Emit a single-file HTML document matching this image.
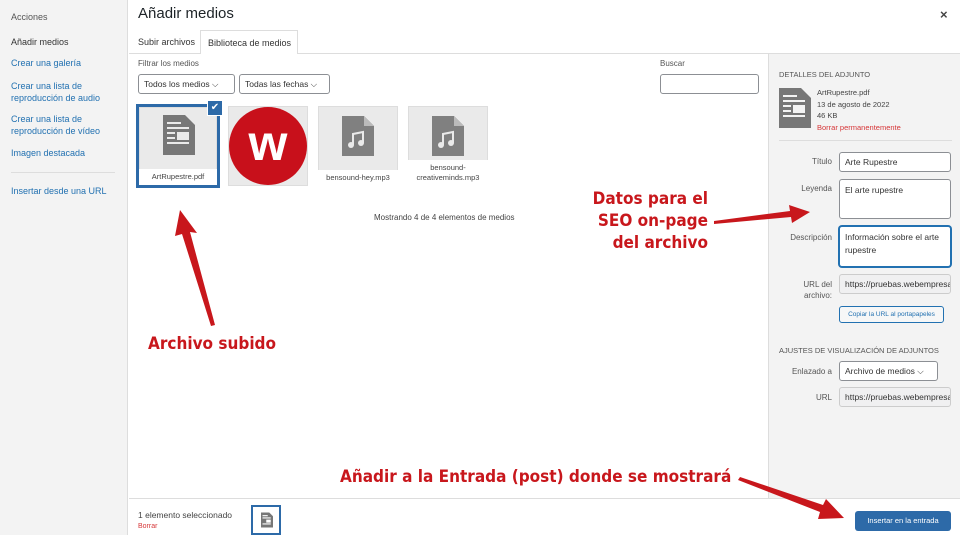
<!DOCTYPE html>
<html><head><meta charset="utf-8"><style>
*{box-sizing:border-box;margin:0;padding:0}
body{width:960px;height:535px;overflow:hidden;font-family:"Liberation Sans",sans-serif;background:#fff;position:relative;color:#333}
.abs{position:absolute}
.side{left:0;top:0;width:128px;height:535px;background:#f3f3f3;border-right:1px solid #ddd}
.side div{position:absolute;left:11px;font-size:9px;color:#2271b1;line-height:12px}
.lbl{font-size:8px;color:#555}
.input{position:absolute;background:#fff;border:1px solid #8c8f94;border-radius:3px;font-size:8.5px;color:#333;padding:0 5px;line-height:18px;height:20px;overflow:hidden;white-space:nowrap}
.thumb{position:absolute;top:106px;width:80px;height:80px;background:#eaeaea;box-shadow:inset 0 0 0 1px #ddd}
.cap{position:absolute;bottom:0;left:0;right:0;background:#fff;font-size:7.5px;text-align:center;color:#444;line-height:10px;padding:3px 0}
.ann{position:absolute;color:#c8171c;font-weight:bold;font-family:"DejaVu Sans Condensed","Liberation Sans",sans-serif;font-size:17px;text-align:right;line-height:22px}
</style></head><body>
<div class="abs side">
<div style="top:11px;color:#555">Acciones</div>
<div style="top:36px;color:#333">Añadir medios</div>
<div style="top:57px">Crear una galería</div>
<div style="top:80px">Crear una lista de<br>reproducción de audio</div>
<div style="top:113px">Crear una lista de<br>reproducción de vídeo</div>
<div style="top:147px">Imagen destacada</div>
<div style="top:172px;left:11px;width:104px;height:1px;background:#ddd"></div>
<div style="top:185px">Insertar desde una URL</div>
</div>
<div class="abs" style="left:138px;top:5px;font-size:15px;color:#1d2327">Añadir medios</div>
<div class="abs" style="left:940px;top:7px;font-size:13px;color:#444;font-weight:bold">×</div>
<div class="abs" style="left:129px;top:53px;right:0;height:1px;background:#ddd"></div>
<div class="abs" style="left:138px;top:37px;font-size:9px">Subir archivos</div>
<div class="abs" style="left:200px;top:30px;width:98px;height:24px;border:1px solid #ddd;border-bottom:none;background:#fff;font-size:9px;padding:7px 0 0 7px">Biblioteca de medios</div>
<div class="abs lbl" style="left:138px;top:59px">Filtrar los medios</div>
<div class="input" style="left:138px;top:74px;width:97px">Todos los medios ⌵</div>
<div class="input" style="left:239px;top:74px;width:91px">Todas las fechas ⌵</div>
<div class="abs lbl" style="left:660px;top:59px">Buscar</div>
<div class="input" style="left:660px;top:74px;width:99px"></div>
<div class="thumb" style="left:136px;top:104px;width:84px;height:84px;border:3px solid #2d6aa8;background:#eaeaea">
<svg class="abs" style="left:24px;top:8px" width="32" height="40" viewBox="0 0 32 40"><path d="M0 0h22l10 10v30H0z" fill="#777"/><g fill="#eaeaea"><rect x="4" y="7" width="14" height="2"/><rect x="4" y="12" width="22" height="2"/><rect x="4" y="17" width="8" height="2"/><rect x="14" y="17" width="12" height="8"/><rect x="4" y="22" width="8" height="2"/><rect x="4" y="27" width="22" height="2"/></g></svg>
<div class="cap">ArtRupestre.pdf</div></div>
<div class="abs" style="left:207px;top:100px;width:16px;height:16px;background:#2d6aa8;border:1px solid #fff;color:#fff;font-size:10px;text-align:center;line-height:14px">✔</div>
<div class="thumb" style="left:228px"><div class="abs" style="left:1px;top:1px;width:78px;height:78px;border-radius:50%;background:#c8101b;color:#fff;font-size:50px;font-weight:bold;text-align:center;line-height:72px">w</div></div>
<div class="thumb" style="left:318px"><svg class="abs" style="left:24px;top:10px" width="32" height="40" viewBox="0 0 32 40"><path d="M0 0h22l10 10v30H0z" fill="#808080"/><path d="M22 0v10h10" fill="#bbb"/><path d="M11 29V18l10-2v11" stroke="#eaeaea" stroke-width="2" fill="none"/><circle cx="9" cy="29" r="3" fill="#eaeaea"/><circle cx="19" cy="27" r="3" fill="#eaeaea"/></svg><div class="cap">bensound-hey.mp3</div></div>
<div class="thumb" style="left:408px"><svg class="abs" style="left:24px;top:10px" width="32" height="40" viewBox="0 0 32 40"><path d="M0 0h22l10 10v30H0z" fill="#808080"/><path d="M22 0v10h10" fill="#bbb"/><path d="M11 29V18l10-2v11" stroke="#eaeaea" stroke-width="2" fill="none"/><circle cx="9" cy="29" r="3" fill="#eaeaea"/><circle cx="19" cy="27" r="3" fill="#eaeaea"/></svg><div class="cap">bensound-<br>creativeminds.mp3</div></div>
<div class="abs" style="left:374px;top:213px;font-size:8px;color:#444">Mostrando 4 de 4 elementos de medios</div>
<div class="abs" style="left:768px;top:54px;width:192px;height:444px;background:#f3f3f3;border-left:1px solid #ddd"></div>
<div class="abs lbl" style="left:779px;top:70px;font-size:7.5px">DETALLES DEL ADJUNTO</div>
<svg class="abs" style="left:779px;top:87px" width="32" height="42" viewBox="0 0 32 40"><path d="M0 0h22l10 10v30H0z" fill="#777"/><g fill="#f3f3f3"><rect x="4" y="7" width="14" height="2"/><rect x="4" y="12" width="22" height="2"/><rect x="4" y="17" width="8" height="2"/><rect x="14" y="17" width="12" height="8"/><rect x="4" y="22" width="8" height="2"/><rect x="4" y="27" width="22" height="2"/></g></svg>
<div class="abs" style="left:817px;top:87px;font-size:7.5px;line-height:11.5px;color:#444">ArtRupestre.pdf<br>13 de agosto de 2022<br>46 KB<br><span style="color:#d63638">Borrar permanentemente</span></div>
<div class="abs" style="left:779px;top:140px;width:173px;height:1px;background:#ddd"></div>
<div class="abs lbl" style="left:780px;top:157px;width:52px;text-align:right">Título</div>
<div class="input" style="left:839px;top:152px;width:112px">Arte Rupestre</div>
<div class="abs lbl" style="left:780px;top:184px;width:52px;text-align:right">Leyenda</div>
<div class="input" style="left:839px;top:179px;width:112px;height:40px;line-height:20px">El arte rupestre</div>
<div class="abs lbl" style="left:780px;top:233px;width:52px;text-align:right">Descripción</div>
<div class="input" style="left:839px;top:226px;width:112px;height:41px;line-height:13px;padding-top:4px;white-space:normal;border-color:#2271b1;box-shadow:0 0 0 1px #2271b1">Información sobre el arte rupestre</div>
<div class="abs lbl" style="left:780px;top:279px;width:52px;text-align:right;line-height:11px">URL del<br>archivo:</div>
<div class="input" style="left:839px;top:274px;width:112px;background:#f0f0f1;border-color:#ccc">https://pruebas.webempresa</div>
<div class="abs" style="left:839px;top:306px;width:105px;height:17px;border:1px solid #2271b1;border-radius:3px;color:#2271b1;font-size:6.5px;text-align:center;line-height:15px;background:#f6f7f7">Copiar la URL al portapapeles</div>
<div class="abs lbl" style="left:779px;top:346px;font-size:7.5px">AJUSTES DE VISUALIZACIÓN DE ADJUNTOS</div>
<div class="abs lbl" style="left:780px;top:367px;width:52px;text-align:right">Enlazado a</div>
<div class="input" style="left:839px;top:361px;width:99px">Archivo de medios ⌵</div>
<div class="abs lbl" style="left:780px;top:393px;width:52px;text-align:right">URL</div>
<div class="input" style="left:839px;top:387px;width:112px;background:#f0f0f1;border-color:#ccc">https://pruebas.webempresa</div>
<div class="abs" style="left:129px;top:498px;right:0;height:1px;background:#ddd"></div>
<div class="abs" style="left:138px;top:510px;font-size:8.5px;color:#444">1 elemento seleccionado</div>
<div class="abs" style="left:138px;top:523px;font-size:7px;color:#d63638">Borrar</div>
<div class="abs" style="left:251px;top:505px;width:30px;height:30px;border:2px solid #2d6aa8;background:#fff"><svg class="abs" style="left:8px;top:5px" width="12" height="16" viewBox="0 0 32 40"><path d="M0 0h22l10 10v30H0z" fill="#777"/><g fill="#fff"><rect x="4" y="7" width="14" height="3"/><rect x="4" y="13" width="22" height="3"/><rect x="14" y="19" width="12" height="8"/><rect x="4" y="29" width="22" height="3"/></g></svg></div>
<div class="abs" style="left:855px;top:511px;width:96px;height:20px;background:#2d6aa8;border-radius:3px;color:#fff;font-size:7.5px;text-align:center;line-height:20px">Insertar en la entrada</div>
<div class="ann" style="left:560px;top:188px;width:148px">Datos para el<br>SEO on-page<br>del archivo</div>
<div class="ann" style="left:148px;top:333px;text-align:left">Archivo subido</div>
<div class="ann" style="left:340px;top:466px;text-align:left">Añadir a la Entrada (post) donde se mostrará</div>
<svg class="abs" style="left:0;top:0" width="960" height="535">
<g fill="#c8171c">
<polygon points="211,326 215,325 190,232 197,233 180,210 175,236 182,234"/>
<polygon points="714,224 714,221 790,211 789,205 810,212 792,223 791,217"/>
<polygon points="738,480 740,477 823,505 826,499 844,518 818,519 820,512"/>
</g></svg>
</body></html>
